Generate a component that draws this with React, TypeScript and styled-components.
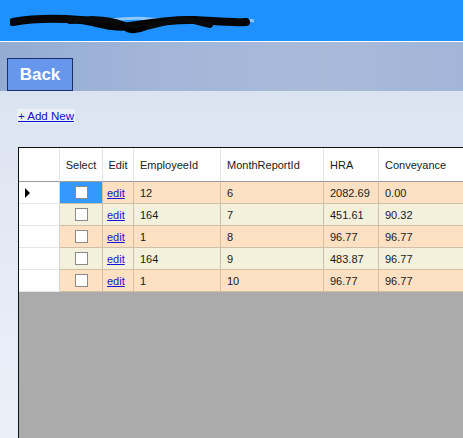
import React from "react";
import styled, { createGlobalStyle } from "styled-components";

const GlobalStyle = createGlobalStyle`
  html, body {
    margin: 0;
    padding: 0;
    overflow: hidden;
  }
  body {
    font-family: "Liberation Sans", Arial, sans-serif;
    background: #e4eaf5;
  }
`;

type Row = {
  employeeId: string;
  monthReportId: string;
  hra: string;
  conveyance: string;
};

const rows: Row[] = [
  { employeeId: "12", monthReportId: "6", hra: "2082.69", conveyance: "0.00" },
  { employeeId: "164", monthReportId: "7", hra: "451.61", conveyance: "90.32" },
  { employeeId: "1", monthReportId: "8", hra: "96.77", conveyance: "96.77" },
  { employeeId: "164", monthReportId: "9", hra: "483.87", conveyance: "96.77" },
  { employeeId: "1", monthReportId: "10", hra: "96.77", conveyance: "96.77" },
];

// widths include the 1px right border of every cell
const COLS = "41px 43px 31px 87px 103px 55px 110px";

const Page = styled.div`
  width: 463px;
  height: 438px;
  display: flex;
  flex-direction: column;
  overflow: hidden;
`;

const TitleBar = styled.div`
  height: 42px;
  flex-shrink: 0;
  box-sizing: border-box;
  background: #1e90ff;
  border-bottom: 1px solid #ffffff;
  display: flex;
  align-items: center;
  padding: 2px 0 0 10px;
`;

const ButtonBand = styled.div`
  height: 49px;
  flex-shrink: 0;
  box-sizing: border-box;
  padding: 16px 0 0 7px;
  background: linear-gradient(90deg, #94abd2 0%, #a3b6d9 35%, #a9bad9 70%, #a2b5d8 100%);
`;

const BackButton = styled.button`
  width: 66px;
  height: 33px;
  box-sizing: border-box;
  border: 1px solid #16306e;
  background: #6797ec;
  color: #ffffff;
  font-family: "Liberation Sans", Arial, sans-serif;
  font-weight: bold;
  font-size: 17px;
  padding: 0;
  cursor: pointer;
`;

const Content = styled.div`
  flex: 1;
  display: flex;
  flex-direction: column;
  background: linear-gradient(180deg, #dbe3f1 0%, #e3e9f4 40%, #ebf0f8 100%);
  padding-top: 18px;
`;

const AddNew = styled.a`
  align-self: flex-start;
  margin-left: 17px;
  padding: 1px 1px 0 1px;
  background: #ebeff8;
  color: #1010c8;
  font-size: 11.5px;
  line-height: 13px;
  text-decoration: underline;
  cursor: pointer;
`;

const Grid = styled.div`
  margin: 24px 0 0 18px;
  flex: 1;
  border-left: 1px solid #101010;
  border-top: 1px solid #101010;
  background: #ababab;
  overflow: hidden;
`;

const GridRow = styled.div<{ $header?: boolean }>`
  display: grid;
  grid-template-columns: ${COLS};
  height: ${(p) => (p.$header ? "34px" : "22px")};
`;

const HeadCell = styled.div<{ $center?: boolean }>`
  box-sizing: border-box;
  background: #ffffff;
  border-right: 1px solid #e4e4e4;
  border-bottom: 1px solid #9a9a9a;
  display: flex;
  align-items: center;
  justify-content: ${(p) => (p.$center ? "center" : "flex-start")};
  padding-left: ${(p) => (p.$center ? "0" : "6px")};
  font-size: 11px;
  color: #1a1a1a;
  white-space: nowrap;
  overflow: hidden;
`;

const RowHeader = styled.div`
  box-sizing: border-box;
  background: #ffffff;
  border-right: 1px solid #d6d6d6;
  border-bottom: 1px solid #e8e8e8;
  display: flex;
  align-items: center;
  padding-left: 6px;
`;

const Cell = styled.div<{ $alt: boolean; $selected?: boolean; $center?: boolean }>`
  box-sizing: border-box;
  background: ${(p) => (p.$selected ? "#3399ff" : p.$alt ? "#f3f1dc" : "#fee0c2")};
  border-right: 1px solid #cfbfa6;
  border-bottom: 1px solid #cfbfa6;
  display: flex;
  align-items: center;
  justify-content: ${(p) => (p.$center ? "center" : "flex-start")};
  padding-left: ${(p) => (p.$center ? "0" : "6px")};
  font-size: 11px;
  color: #1a1a1a;
  white-space: nowrap;
  overflow: hidden;
`;

const Check = styled.span`
  width: 13px;
  height: 13px;
  box-sizing: border-box;
  border: 1px solid #8a8a8a;
  background: #ffffff;
  margin-left: 1px;
`;

const EditLink = styled.a`
  color: #1414d2;
  text-decoration: underline;
  font-size: 11px;
  margin-left: -2px;
  cursor: pointer;
`;

const Arrow = () => (
  <svg width="6" height="10" viewBox="0 0 6 10">
    <path d="M0 0 L5 5 L0 10 Z" fill="#000000" />
  </svg>
);

// redaction scribble over the page title
const Scribble = () => (
  <svg width="250" height="30" viewBox="0 0 250 30">
    <path
      d="M4 14 C30 10 60 12 80 13 C100 15 118 9 140 12 C165 14 190 11 205 13 C218 14 232 12 244 14"
      stroke="#ffffff"
      strokeWidth="3"
      fill="none"
      opacity="0.5"
    />
    <path
      d="M3 15 C20 12 45 11 70 13 C85 14 100 22 120 19 C140 16 160 12 185 13 C205 14 220 16 236 15"
      stroke="#050505"
      strokeWidth="8"
      strokeLinecap="round"
      fill="none"
    />
    <path
      d="M60 14 C75 12 95 10 112 17 C125 24 140 20 160 14 C175 10 190 16 200 18"
      stroke="#0a0a0a"
      strokeWidth="6"
      strokeLinecap="round"
      fill="none"
    />
    <path
      d="M112 18 C118 26 128 24 135 21"
      stroke="#000000"
      strokeWidth="5"
      strokeLinecap="round"
      fill="none"
    />
  </svg>
);

export default function App() {
  return (
    <Page>
      <GlobalStyle />
      <TitleBar>
        <Scribble />
      </TitleBar>
      <ButtonBand>
        <BackButton>Back</BackButton>
      </ButtonBand>
      <Content>
        <AddNew>+ Add New</AddNew>
        <Grid>
          <GridRow $header>
            <HeadCell />
            <HeadCell $center>Select</HeadCell>
            <HeadCell $center>Edit</HeadCell>
            <HeadCell>EmployeeId</HeadCell>
            <HeadCell>MonthReportId</HeadCell>
            <HeadCell>HRA</HeadCell>
            <HeadCell>Conveyance</HeadCell>
          </GridRow>
          {rows.map((r, i) => {
            const alt = i % 2 === 1;
            return (
              <GridRow key={i}>
                <RowHeader>{i === 0 && <Arrow />}</RowHeader>
                <Cell $alt={alt} $selected={i === 0} $center>
                  <Check />
                </Cell>
                <Cell $alt={alt}>
                  <EditLink>edit</EditLink>
                </Cell>
                <Cell $alt={alt}>{r.employeeId}</Cell>
                <Cell $alt={alt}>{r.monthReportId}</Cell>
                <Cell $alt={alt}>{r.hra}</Cell>
                <Cell $alt={alt}>{r.conveyance}</Cell>
              </GridRow>
            );
          })}
        </Grid>
      </Content>
    </Page>
  );
}
